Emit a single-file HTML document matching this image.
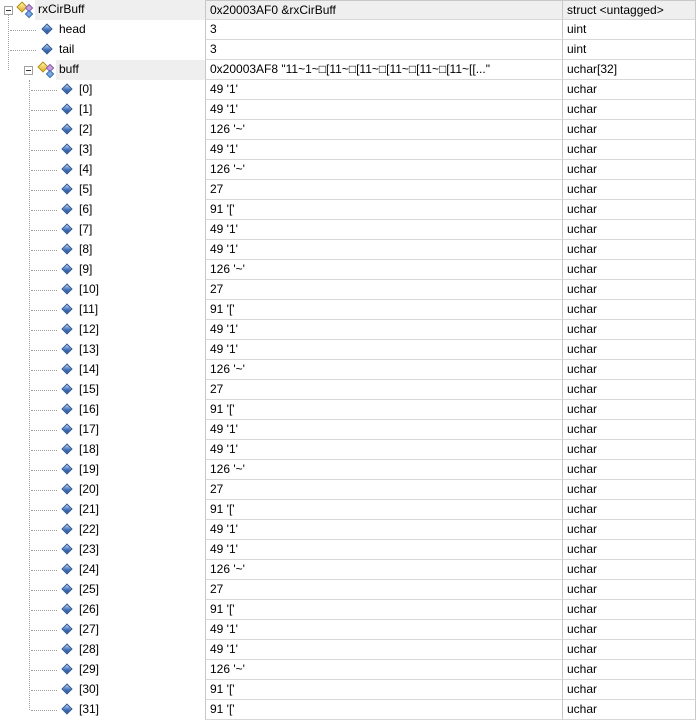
<!DOCTYPE html>
<html><head><meta charset="utf-8"><style>
*{margin:0;padding:0;box-sizing:border-box}
body{width:700px;height:722px;background:#fff;font-family:"Liberation Sans","DejaVu Sans",sans-serif;font-size:12px;color:#000;position:relative;overflow:hidden}
.r{position:absolute;left:0;width:700px;height:20px}
.v{position:absolute;left:205px;width:357px;height:20px;border-left:1px solid #c8c8c8;border-bottom:1px solid #d8d8d8;padding-left:4px;line-height:19px}
.t{position:absolute;left:562px;width:134px;height:20px;border-left:1px solid #c8c8c8;border-right:1px solid #c8c8c8;border-bottom:1px solid #d8d8d8;padding-left:4px;line-height:19px}
.n{position:absolute;top:0;line-height:19px;height:20px;padding-left:3px}
.g{background:#efefef}
.d{position:absolute;width:8px;height:8px;transform:rotate(45deg);background:linear-gradient(135deg,#bcd4f4,#3d6fb8 60%,#2a4f8c);border:1px solid #2c5590}
.vl{position:absolute;border-left:1px dotted #a0a0a0;width:0}
.hl{position:absolute;border-top:1px dotted #a0a0a0;height:0}
.box{position:absolute;width:9px;height:9px;border:1px solid #a0a0a0;background:#fff}
.box:after{content:"";position:absolute;left:1px;top:3px;width:5px;height:1px;background:#333}
.y{position:absolute;width:8px;height:8px;transform:rotate(45deg);background:linear-gradient(135deg,#fff3a8,#e0b020);border:1px solid #b08a10}
.p{position:absolute;width:6px;height:6px;transform:rotate(45deg);background:#c8a0e0;border:1px solid #8a60b0}
.b{position:absolute;width:6px;height:6px;transform:rotate(45deg);background:#7aa8e0;border:1px solid #3d6fb8}
.c .hl{left:31px;top:10px;width:26px}
.c .d{left:63px;top:5px}
</style></head><body>
<div class="vl" style="left:8px;top:14px;height:56px"></div>
<div class="vl" style="left:29px;top:80px;height:630px"></div>
<div class="box" style="left:4px;top:6px"></div>
<div class="box" style="left:24px;top:66px"></div>
<div class="hl" style="left:10px;top:30px;width:26px"></div>
<div class="hl" style="left:10px;top:50px;width:26px"></div>

<div class="r" style="top:0"><div class="n g" style="left:35px;width:170px">rxCirBuff</div><div class="v g" style="border-top:1px solid #c8c8c8">0x20003AF0 &amp;rxCirBuff</div><div class="t g" style="border-top:1px solid #c8c8c8">struct &lt;untagged&gt;</div></div>
<div class="r" style="top:20px"><div class="n" style="left:56px">head</div><div class="v">3</div><div class="t">uint</div></div>
<div class="r" style="top:40px"><div class="n" style="left:56px">tail</div><div class="v">3</div><div class="t">uint</div></div>
<div class="r" style="top:60px"><div class="n g" style="left:56px;width:149px">buff</div><div class="v">0x20003AF8 "11~1~&#9633;[11~&#9633;[11~&#9633;[11~&#9633;[11~&#9633;[11~[[..."</div><div class="t">uchar[32]</div></div>

<div class="y" style="left:18px;top:3px"></div><div class="p" style="left:26px;top:5px"></div><div class="b" style="left:26px;top:11px"></div>
<div class="y" style="left:39px;top:63px"></div><div class="p" style="left:47px;top:65px"></div><div class="b" style="left:47px;top:71px"></div>
<div class="d" style="left:43px;top:25px"></div>
<div class="d" style="left:43px;top:45px"></div>

<div class="r c" style="top:80px"><div class="hl"></div><div class="d"></div><div class="n" style="left:76px">[0]</div><div class="v">49 '1'</div><div class="t">uchar</div></div>
<div class="r c" style="top:100px"><div class="hl"></div><div class="d"></div><div class="n" style="left:76px">[1]</div><div class="v">49 '1'</div><div class="t">uchar</div></div>
<div class="r c" style="top:120px"><div class="hl"></div><div class="d"></div><div class="n" style="left:76px">[2]</div><div class="v">126 '~'</div><div class="t">uchar</div></div>
<div class="r c" style="top:140px"><div class="hl"></div><div class="d"></div><div class="n" style="left:76px">[3]</div><div class="v">49 '1'</div><div class="t">uchar</div></div>
<div class="r c" style="top:160px"><div class="hl"></div><div class="d"></div><div class="n" style="left:76px">[4]</div><div class="v">126 '~'</div><div class="t">uchar</div></div>
<div class="r c" style="top:180px"><div class="hl"></div><div class="d"></div><div class="n" style="left:76px">[5]</div><div class="v">27</div><div class="t">uchar</div></div>
<div class="r c" style="top:200px"><div class="hl"></div><div class="d"></div><div class="n" style="left:76px">[6]</div><div class="v">91 '['</div><div class="t">uchar</div></div>
<div class="r c" style="top:220px"><div class="hl"></div><div class="d"></div><div class="n" style="left:76px">[7]</div><div class="v">49 '1'</div><div class="t">uchar</div></div>
<div class="r c" style="top:240px"><div class="hl"></div><div class="d"></div><div class="n" style="left:76px">[8]</div><div class="v">49 '1'</div><div class="t">uchar</div></div>
<div class="r c" style="top:260px"><div class="hl"></div><div class="d"></div><div class="n" style="left:76px">[9]</div><div class="v">126 '~'</div><div class="t">uchar</div></div>
<div class="r c" style="top:280px"><div class="hl"></div><div class="d"></div><div class="n" style="left:76px">[10]</div><div class="v">27</div><div class="t">uchar</div></div>
<div class="r c" style="top:300px"><div class="hl"></div><div class="d"></div><div class="n" style="left:76px">[11]</div><div class="v">91 '['</div><div class="t">uchar</div></div>
<div class="r c" style="top:320px"><div class="hl"></div><div class="d"></div><div class="n" style="left:76px">[12]</div><div class="v">49 '1'</div><div class="t">uchar</div></div>
<div class="r c" style="top:340px"><div class="hl"></div><div class="d"></div><div class="n" style="left:76px">[13]</div><div class="v">49 '1'</div><div class="t">uchar</div></div>
<div class="r c" style="top:360px"><div class="hl"></div><div class="d"></div><div class="n" style="left:76px">[14]</div><div class="v">126 '~'</div><div class="t">uchar</div></div>
<div class="r c" style="top:380px"><div class="hl"></div><div class="d"></div><div class="n" style="left:76px">[15]</div><div class="v">27</div><div class="t">uchar</div></div>
<div class="r c" style="top:400px"><div class="hl"></div><div class="d"></div><div class="n" style="left:76px">[16]</div><div class="v">91 '['</div><div class="t">uchar</div></div>
<div class="r c" style="top:420px"><div class="hl"></div><div class="d"></div><div class="n" style="left:76px">[17]</div><div class="v">49 '1'</div><div class="t">uchar</div></div>
<div class="r c" style="top:440px"><div class="hl"></div><div class="d"></div><div class="n" style="left:76px">[18]</div><div class="v">49 '1'</div><div class="t">uchar</div></div>
<div class="r c" style="top:460px"><div class="hl"></div><div class="d"></div><div class="n" style="left:76px">[19]</div><div class="v">126 '~'</div><div class="t">uchar</div></div>
<div class="r c" style="top:480px"><div class="hl"></div><div class="d"></div><div class="n" style="left:76px">[20]</div><div class="v">27</div><div class="t">uchar</div></div>
<div class="r c" style="top:500px"><div class="hl"></div><div class="d"></div><div class="n" style="left:76px">[21]</div><div class="v">91 '['</div><div class="t">uchar</div></div>
<div class="r c" style="top:520px"><div class="hl"></div><div class="d"></div><div class="n" style="left:76px">[22]</div><div class="v">49 '1'</div><div class="t">uchar</div></div>
<div class="r c" style="top:540px"><div class="hl"></div><div class="d"></div><div class="n" style="left:76px">[23]</div><div class="v">49 '1'</div><div class="t">uchar</div></div>
<div class="r c" style="top:560px"><div class="hl"></div><div class="d"></div><div class="n" style="left:76px">[24]</div><div class="v">126 '~'</div><div class="t">uchar</div></div>
<div class="r c" style="top:580px"><div class="hl"></div><div class="d"></div><div class="n" style="left:76px">[25]</div><div class="v">27</div><div class="t">uchar</div></div>
<div class="r c" style="top:600px"><div class="hl"></div><div class="d"></div><div class="n" style="left:76px">[26]</div><div class="v">91 '['</div><div class="t">uchar</div></div>
<div class="r c" style="top:620px"><div class="hl"></div><div class="d"></div><div class="n" style="left:76px">[27]</div><div class="v">49 '1'</div><div class="t">uchar</div></div>
<div class="r c" style="top:640px"><div class="hl"></div><div class="d"></div><div class="n" style="left:76px">[28]</div><div class="v">49 '1'</div><div class="t">uchar</div></div>
<div class="r c" style="top:660px"><div class="hl"></div><div class="d"></div><div class="n" style="left:76px">[29]</div><div class="v">126 '~'</div><div class="t">uchar</div></div>
<div class="r c" style="top:680px"><div class="hl"></div><div class="d"></div><div class="n" style="left:76px">[30]</div><div class="v">91 '['</div><div class="t">uchar</div></div>
<div class="r c" style="top:700px"><div class="hl"></div><div class="d"></div><div class="n" style="left:76px">[31]</div><div class="v">91 '['</div><div class="t">uchar</div></div>
</body></html>
